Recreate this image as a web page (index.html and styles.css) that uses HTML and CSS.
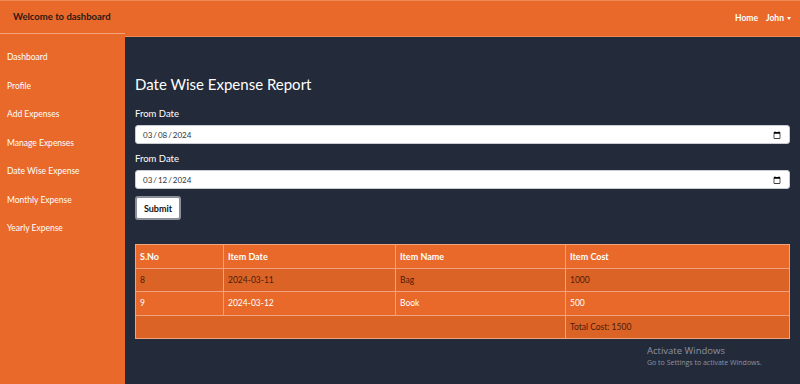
FILE: index.html
```html
<!DOCTYPE html>
<html lang="en">
<head>
    <meta charset="UTF-8">
    <title>Date Wise Expense Report</title>
    <link rel="stylesheet" href="styles.css">
</head>
<body>
    <div class="layout">
        <div class="brand">Welcome to dashboard</div>
        <div class="topbar">
            <a href="#">Home</a>
            <a href="#">John <span class="caret"></span></a>
        </div>

        <!-- Menu lateral -->
        <nav class="sidebar">
            <a href="#">Dashboard</a>
            <a href="#">Profile</a>
            <a href="#">Add Expenses</a>
            <a href="#">Manage Expenses</a>
            <a href="#">Date Wise Expense</a>
            <a href="#">Monthly Expense</a>
            <a href="#">Yearly Expense</a>
        </nav>

        <main class="content">
            <h1>Date Wise Expense Report</h1>
            <form class="report-form">
                <label for="from">From Date</label>
                <input type="date" id="from" value="2024-03-08">
                <label for="to">From Date</label>
                <input type="date" id="to" value="2024-03-12">
                <button type="button" class="btn">Submit</button>
            </form>

            <table class="report">
                <thead>
                    <tr>
                        <th class="c1">S.No</th>
                        <th class="c2">Item Date</th>
                        <th class="c3">Item Name</th>
                        <th>Item Cost</th>
                    </tr>
                </thead>
                <tbody>
                    <tr class="dark">
                        <td>8</td>
                        <td>2024-03-11</td>
                        <td>Bag</td>
                        <td>1000</td>
                    </tr>
                    <tr>
                        <td>9</td>
                        <td>2024-03-12</td>
                        <td>Book</td>
                        <td>500</td>
                    </tr>
                    <tr class="dark">
                        <td colspan="3"></td>
                        <td>Total Cost: 1500</td>
                    </tr>
                </tbody>
            </table>
        </main>
    </div>

    <div class="activate">
        <div class="title">Activate Windows</div>
        <div>Go to Settings to activate Windows.</div>
    </div>
</body>
</html>
```

FILE: styles.css
```css
/* Estilos gerais */
* {
    box-sizing: border-box;
}

body {
    margin: 0;
    font-family: Lato, "Noto Sans", sans-serif;
    background-color: #232a3a;
    overflow: hidden;
}

a {
    text-decoration: none;
}

.layout {
    display: grid;
    grid-template-columns: 125px 1fr;
    grid-template-rows: 37px 1fr;
    height: 384px;
}

.brand {
    background-color: #e9692a;
    border-top: 1px solid #f08a55;
    color: #2a1a14;
    font-size: 9.5px;
    font-weight: 700;
    padding: 10px 0 0 13px;
    position: relative;
}

.brand::after {
    content: "";
    position: absolute;
    left: 0;
    right: 0;
    top: 32px;
    height: 1px;
    background-color: #f3a27a;
}

.topbar {
    background-color: #e9692a;
    border-top: 1px solid #f08a55;
    border-bottom: 1px solid #f08a55;
    display: flex;
    justify-content: flex-end;
    align-items: center;
    gap: 8px;
    padding: 0 9px 2px 0;
}

.topbar a {
    color: #fff;
    font-size: 8.5px;
    font-weight: 700;
}

.caret {
    display: inline-block;
    border-left: 2.5px solid transparent;
    border-right: 2.5px solid transparent;
    border-top: 3px solid #fff;
    vertical-align: middle;
    margin-left: 1px;
}

.sidebar {
    background-color: #e9692a;
    display: flex;
    flex-direction: column;
    padding: 14px 0 0 7px;
}

.sidebar a {
    color: #fff;
    font-size: 8.5px;
    height: 28.5px;
    line-height: 12px;
}

.content {
    padding: 0 10px 0 10px;
    color: #fff;
}

.content h1 {
    font-size: 15px;
    font-weight: 400;
    margin: 38px 0 13px;
}

.report-form {
    display: flex;
    flex-direction: column;
    align-items: flex-start;
}

.report-form label {
    font-size: 9.5px;
    padding-top: 2px;
    margin-bottom: 6px;
}

.report-form input {
    width: 100%;
    height: 19px;
    border: 1px solid #c9ccd3;
    border-radius: 3px;
    background-color: #fff;
    font-family: inherit;
    font-size: 8px;
    color: #333;
    padding: 0 6px;
    margin-bottom: 7px;
}

.btn {
    height: 24px;
    width: 46px;
    background-color: #fff;
    border: 2px solid #8a8f99;
    border-radius: 3px;
    font-family: inherit;
    font-size: 9px;
    font-weight: 700;
    color: #111;
    padding: 0;
}

.report {
    width: 100%;
    margin-top: 24px;
    border-collapse: collapse;
    background-color: #e9692a;
    border: 1px solid #d9d2cc;
    font-size: 8.5px;
}

.report th,
.report td {
    height: 23.5px;
    text-align: left;
    padding: 0 4px;
    border: 1px solid #f2a37c;
}

.report th {
    color: #fff;
    font-weight: 700;
    font-size: 9px;
}

.report td {
    color: #fff;
}

.report .c1 { width: 88px; }
.report .c2 { width: 172px; }
.report .c3 { width: 170px; }

.report tr.dark td {
    background-color: #dc6326;
    color: #4a1d0c;
}

.activate {
    position: absolute;
    left: 647px;
    top: 344px;
    color: #8d93a0;
    font-family: "Open Sans", sans-serif;
    font-size: 7px;
}

.activate .title {
    font-size: 9.5px;
    margin-bottom: 1px;
}
```
